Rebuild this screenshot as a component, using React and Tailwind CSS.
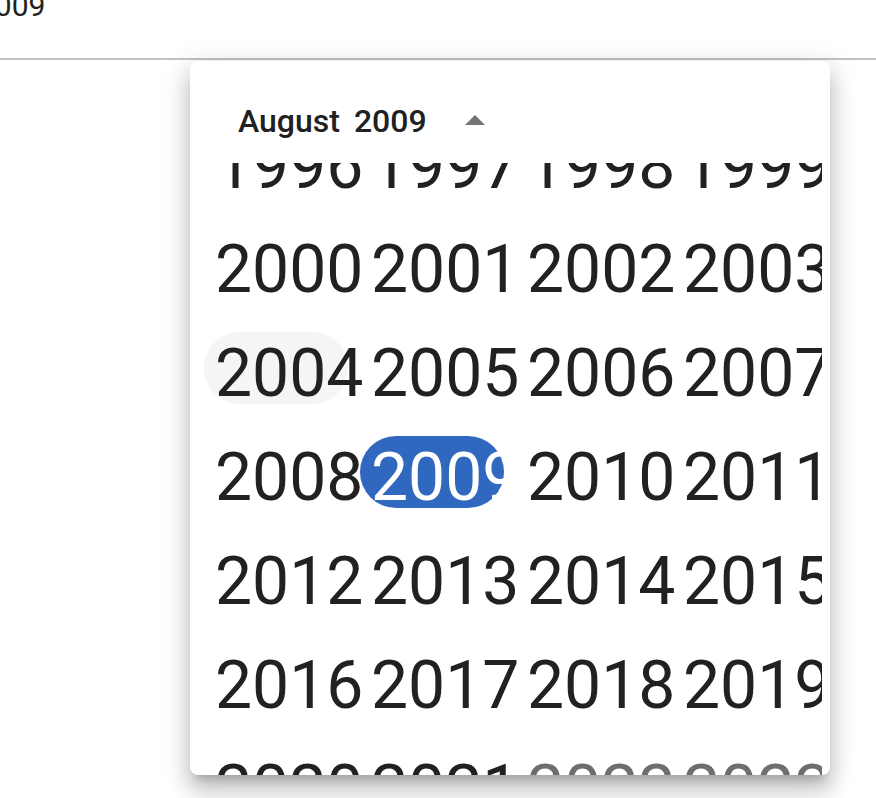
import React from "react";

const years = [];
for (let y = 1996; y <= 2023; y++) years.push(y);

function YearButton({ year }) {
  const selected = year === 2009;
  const hovered = year === 2004;
  const disabled = year > 2021;
  let cls =
    "w-[144px] h-[72px] rounded-[36px] pl-[11px] pt-[6px] text-left text-[66px] leading-[72px] whitespace-nowrap overflow-visible font-normal ";
  if (selected) cls += "bg-[#3067bf] text-white";
  else if (hovered) cls += "bg-[#f5f5f5] text-[#212121]";
  else if (disabled) cls += "text-[#6e6e6e]";
  else cls += "text-[#212121]";
  return (
    <div className="flex justify-center py-4">
      <div className={cls}>{year}</div>
    </div>
  );
}

export default function App() {
  return (
    <div
      className="w-[876px] h-[798px] bg-white overflow-hidden"
      style={{ fontFamily: "Roboto, 'Noto Sans', Arial, sans-serif" }}
    >
      <div className="h-[60px] border-b-2 border-[#c2c2c2] overflow-hidden">
        <div className="-mt-[9px] -ml-[22px] text-[30px] leading-[30px] text-[#212121]">
          2009
        </div>
      </div>
      <div className="ml-[190px] mt-[1px] w-[640px] h-[714px] rounded-lg bg-white overflow-hidden flex flex-col shadow-[0_10px_10px_-6px_rgba(0,0,0,0.2),0_16px_20px_2px_rgba(0,0,0,0.14),0_6px_28px_4px_rgba(0,0,0,0.12)]">
        <div className="h-[102px] pt-[36px] pl-[48px] shrink-0">
          <div className="flex items-center h-[48px]">
            <div className="flex gap-[14px] text-[32px] leading-[32px] font-medium text-[#212121] whitespace-nowrap">
              <span>August</span>
              <span>2009</span>
            </div>
            <div className="ml-[24px] w-[48px] h-[48px]">
              <svg width="48" height="48" viewBox="0 0 24 24">
                <path d="M7 14l5-5 5 5z" fill="#757575" />
              </svg>
            </div>
          </div>
        </div>
        <div className="mx-2 h-[612px] overflow-hidden">
          <div className="-mt-[55px] grid grid-cols-4 w-[624px]">
            {years.map((y) => (
              <YearButton key={y} year={y} />
            ))}
          </div>
        </div>
      </div>
    </div>
  );
}
